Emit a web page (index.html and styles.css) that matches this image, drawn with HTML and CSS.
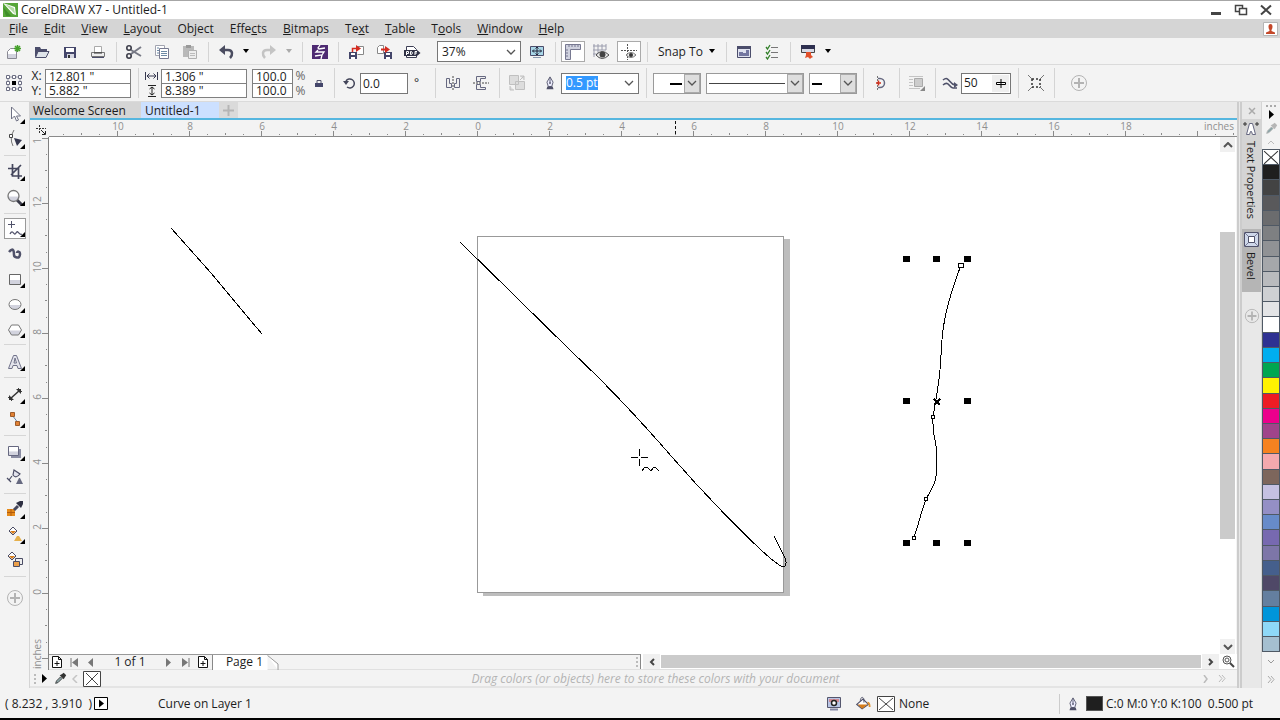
FILE: index.html
```html
<!DOCTYPE html>
<html lang="en">
<head>
<meta charset="utf-8">
<title>CorelDRAW X7 - Untitled-1</title>
<link rel="stylesheet" href="styles.css">
</head>
<body>
<svg class="defs" aria-hidden="true">
  <defs>
    <linearGradient id="pale" x1="0" y1="0" x2="0" y2="1"><stop offset=".5" stop-color="#fff"/><stop offset=".6" stop-color="#d2d3de"/></linearGradient>
    <symbol id="caret" viewBox="0 0 8 5"><path d="M1 0h6L4 4z"/></symbol>
    <symbol id="chev" viewBox="0 0 10 6"><path d="M1 1l4 4 4-4" fill="none" stroke="currentColor" stroke-width="1.3"/></symbol>
    <symbol id="plus" viewBox="0 0 18 18"><g fill="none" stroke="#b3b3b3"><circle cx="9" cy="9" r="7.5"/><path d="M9 4v10M4 9h10" stroke-width="2"/></g></symbol>
    <symbol id="addpage" viewBox="0 0 10 12"><path d="M.5.5h6l3 3v8h-9zM6.500.5v3h3M5 5v5M2.500 7.500h5" fill="#fff" stroke="#111"/></symbol>
    <symbol id="nib" viewBox="0 0 12 16"><path d="M6 1L2.500 7l1.500 5h4l1.500-5zM6 2v6" fill="#eef" stroke="#4f5068"/><circle cx="6" cy="8" r="1" fill="#4f5068"/><path d="M3 12h6l1 3H2z" fill="#4f5068"/></symbol>
    <symbol id="dropper" viewBox="0 0 16 16"><path d="M2 14l1-3 5-5 2 2-5 5z" fill="#8aa3a6" stroke="currentColor"/><path d="M7 4l5 5 1-2 2-3-3-3-3 2z" fill="currentColor"/></symbol>
    <symbol id="bucket" viewBox="0 0 18 16"><path d="M2 9l7-6 6 6-7 5z" fill="#fff" stroke="#4f5068" stroke-width="1.300"/><path d="M3 9h11l-6 5z" fill="#d67d1b"/><path d="M6 5c0-5 4-5 4-1v3" fill="none" stroke="#4f5068"/><path d="M14 7c2 0 2.500 2 2.500 5" fill="none" stroke="#e0922f" stroke-width="2"/></symbol>
  </defs>
</svg>
<header>
  <div class="titlebar">
    <svg class="logo" viewBox="0 0 15 14"><path fill="#57a639" d="M0 0h15v14H0z"/><path fill="#fff" d="M0 0l12 4 1 8-3-1z"/><path d="M2 1l9 4 1 6z" fill="#b5dba5"/><path d="M0 4l8 9H3z" fill="#3f8e2a"/></svg>
    <h1>CorelDRAW X7 - Untitled-1</h1>
    <div class="winctl">
      <button aria-label="Minimize"><svg width="12" height="12"><path d="M1 9.500h10" stroke="#444" stroke-width="3"/></svg></button>
      <button aria-label="Restore"><svg width="14" height="12"><path d="M5 7.500H1.500v-6h7V4M5.500 4.500h7v6h-7z" fill="none" stroke="#444" stroke-width="1.500"/></svg></button>
      <button aria-label="Close"><svg width="12" height="12"><path d="M1 1.500l10 9M11 1.500l-10 9" stroke="#444" stroke-width="2"/></svg></button>
    </div>
  </div>
  <nav class="menubar">
    <button><u>F</u>ile</button><button><u>E</u>dit</button><button><u>V</u>iew</button><button><u>L</u>ayout</button><button>Ob<u>j</u>ect</button><button>Effe<u>c</u>ts</button><button><u>B</u>itmaps</button><button>Te<u>x</u>t</button><button><u>T</u>able</button><button>T<u>o</u>ols</button><button><u>W</u>indow</button><button><u>H</u>elp</button>
    <button class="user" aria-label="Sign in"><svg width="15" height="14"><path fill="#fff" stroke="#b5b5b5" d="M.5.500h14v13H.5z"/><path fill="#c4482a" d="M7.500 2C5 2 5 6 6.500 8v1L3 10.500V12h9v-1.500L8.500 9V8C10 6 10 2 7.500 2z"/></svg></button>
  </nav>
  <div class="bar standard">
    <button class="btn" aria-label="New"><svg width="16" height="16"><path d="M1.500 7.500l3-3h6v10h-9z" fill="url(#pale)" stroke="#8a8a94"/><path d="M11.500 1v7M8 4.500h7M9 2l5 5M14 2L9 7" stroke="#45a12b" stroke-width="1.500"/></svg></button>
    <button class="btn" aria-label="Open"><svg width="16" height="16"><path d="M1 13V3h5l1 2h6v3" fill="#4b4d6b"/><path d="M1.500 13.500L4 7.500h11l-3 6z" fill="#dfe4ea" stroke="#4b4d6b"/></svg></button>
    <button class="btn" aria-label="Save"><svg width="16" height="16"><path d="M2 3h12v11H2z" fill="#44466a"/><path d="M4 4h8v4H4z" fill="#fff"/><path d="M5 10h7v4H5z" fill="#d6d7e2"/><path d="M6 11h2v3H6z" fill="#333"/></svg></button>
    <button class="btn" aria-label="Print"><svg width="16" height="16"><path d="M4.500 8V2.500h7V8" fill="#fff" stroke="#aaa"/><path d="M1.500 8.500h13v4h-13z" fill="#eee" stroke="#777"/><path d="M2 13h12v1H2z" fill="#4b4d6b"/><path d="M4 9h8" stroke="#333"/></svg></button>
    <span class="sep"></span>
    <button class="btn" aria-label="Cut"><svg width="18" height="16"><path d="M6 6l10 6M6 10l10-7" stroke="#777985" stroke-width="2"/><g fill="none" stroke="#3b3c48" stroke-width="1.600"><circle cx="4" cy="4" r="2.200"/><circle cx="4" cy="12" r="2.200"/></g></svg></button>
    <button class="btn" aria-label="Copy"><svg width="16" height="16"><g fill="#fff" stroke="#a2a4b0"><path d="M1.500 1.500h9v10h-9z"/><path d="M5.500 4.500h9v10h-9z" stroke="#777a91"/></g><path d="M3 4h2M3 6.500h2M3 9h2M7 7.500h6M7 9.500h6M7 11.500h6" stroke="#6d8aa5"/></svg></button>
    <button class="btn" aria-label="Paste" disabled><svg width="16" height="16"><path d="M1 2h11v11H1z" fill="#b9b9b9"/><path d="M4 1h5v3H4z" fill="#999"/><path d="M6.500 6.500h8v8h-8z" fill="#ededed" stroke="#b0b0b0"/><path d="M8 9.500h5M8 11.500h5" stroke="#bbb"/></svg></button>
    <span class="sep"></span>
    <button class="btn" aria-label="Undo"><svg width="16" height="16"><path d="M6 6h4c5 0 5 5 2 8" fill="none" stroke="#4a4c60" stroke-width="2.500"/><path d="M1 6l6-5v10z" fill="#4a4c60"/></svg></button>
    <button class="drop" aria-label="Undo list"><svg width="8" height="5"><use href="#caret"/></svg></button>
    <button class="btn" aria-label="Redo" disabled><svg width="16" height="16"><path d="M10 6H6c-5 0-5 5-2 8" fill="none" stroke="#c4c4c4" stroke-width="2.500"/><path d="M15 6L9 1v10z" fill="#c4c4c4"/></svg></button>
    <button class="drop" aria-label="Redo list" disabled><svg width="8" height="5" fill="#aaa"><use href="#caret"/></svg></button>
    <span class="sep"></span>
    <button class="btn" aria-label="Search content"><svg width="16" height="16"><path fill="#4e2a72" d="M0 1h16v14H0z"/><path d="M8 1L6 4l1 1 6-1M6 6L4 8h8L10 11l-7 1M10 11l-1 4" fill="none" stroke="#fff" stroke-width="1.300"/></svg></button>
    <span class="sep"></span>
    <button class="btn" aria-label="Import"><svg width="17" height="16"><path d="M9.500 2.500h6v8h-6" fill="#fff" stroke="#888"/><path d="M1 8h8v7H1z" fill="#44466a"/><path d="M3 9h4v2H3zM3 13h4v2H3z" fill="#fff"/><path d="M4.500 8V4.500H9" fill="none" stroke="#d42b1f" stroke-width="1.500"/><path d="M8 1l5 3.500L8 8z" fill="#d42b1f"/></svg></button>
    <button class="btn" aria-label="Export"><svg width="17" height="16"><path d="M1.500 9.500v-6l2-2h4v8z" fill="#fff" stroke="#888"/><path d="M8 8h8v7H8z" fill="#44466a"/><path d="M10 9h4v2h-4zM10 13h4v2h-4z" fill="#fff"/><path d="M5 5.500h5" stroke="#d42b1f" stroke-width="2"/><path d="M9 2l5 3.500L9 9z" fill="#d42b1f"/></svg></button>
    <button class="btn" aria-label="Publish to PDF"><svg width="17" height="16"><path d="M2.500 13.500v-11h7l3 3v8z" fill="#fff" stroke="#3d3f55"/><path d="M0 6h13l3.500 3L13 12H0z" fill="#2f3144"/><path d="M2.500 11V7.500h2v2h-2M6.500 7.500v3h1l1-1.500-1-1.500zM11 11V7.500h2M11 9h2" stroke="#fff" fill="none"/></svg></button>
    <span class="select zoomsel"><select aria-label="Zoom level"><option>37%</option><option>50%</option><option>100%</option></select><svg class="chev" width="10" height="6"><use href="#chev"/></svg></span>
    <button class="btn" aria-label="Full-screen preview"><svg width="16" height="16"><path d="M1.500 2.500h13v9h-13z" fill="#a9d7e8" stroke="#4b4d6b"/><path d="M4 13.500h8" stroke="#8a9ab0"/><path d="M8 3v8M3.500 7h9M6.500 4.500L8 3l1.500 1.500M6.500 9.500L8 11l1.500-1.500M5 5.500L3.500 7 5 8.500M11 5.500L12.500 7 11 8.500" stroke="#222439" fill="none"/></svg></button>
    <span class="sep"></span>
    <button class="btn on" aria-label="Show rulers" aria-pressed="true"><svg width="18" height="18"><path d="M1.500 1.500h15v5h-10v10h-5z" fill="#d0d2df" stroke="#777991"/><path d="M5 2v2M8 2v2M11 2v2M14 2v2M2 7h2M2 10h2M2 13h2" stroke="#777991"/></svg></button>
    <button class="btn" aria-label="Show grid"><svg width="18" height="16"><path d="M1 2h13M1 6h13M1 10h5M2 0v13M6 0v11M10 0v6M14 0v6" stroke="#9a9cad"/><path d="M4 11q6-7 13 0q-7 7-13 0z" fill="#eee" stroke="#4a4a4a"/><circle cx="10.500" cy="10.500" r="3" fill="#444"/></svg></button>
    <button class="btn on" aria-label="Show guidelines" aria-pressed="true"><svg width="18" height="18"><path d="M1 7.500h16M7.500 1v16" stroke="#555" stroke-dasharray="2 1"/><path d="M6 12q5-5 10 0q-5 5-10 0z" fill="#eee" stroke="#777"/><circle cx="11" cy="12" r="2" fill="#333"/></svg></button>
    <span class="sep"></span>
    <button class="snap">Snap To <svg width="8" height="5"><use href="#caret"/></svg></button>
    <span class="sep"></span>
    <button class="btn" aria-label="Welcome screen"><svg width="16" height="16"><path d="M1.500 2.500h13v11h-13z" fill="#dfe2ef" stroke="#4b4d6b"/><path d="M1 2h14v3H1z" fill="#4b4d6b"/><path d="M3 12V8h4v1h3V6h3v6z" fill="#7376a0"/></svg></button>
    <button class="btn" aria-label="Options"><svg width="14" height="16"><path d="M6 3.500h7M6 8.500h7M6 13.500h7" stroke="#777"/><path d="M1 3l1.500 2L5 1M1 8l1.500 2L5 6M1 13l1.500 2L5 11" stroke="#34802b" fill="none" stroke-width="1.300"/></svg></button>
    <span class="sep"></span>
    <button class="btn" aria-label="Application launcher"><svg width="16" height="16"><path d="M1.500 1.500h13v7h-13z" fill="#d8dae6" stroke="#444"/><path d="M1 1h14v4H1z" fill="#2e3050"/><path d="M6 8h5v3l2 2-2 1-1 1-2-2-3 1 1-3z" fill="#e2502b"/></svg></button>
    <button class="drop" aria-label="Launcher list"><svg width="8" height="5"><use href="#caret"/></svg></button>
  </div>
  <div class="bar props">
    <button class="btn" aria-label="Object origin"><svg width="18" height="18"><path d="M3 3h12v12H3z" fill="none" stroke="#8d8fa0"/><g fill="#fff" stroke="#6b6d82"><path d="M1.500 1.500h3v3h-3zM7.500 1.500h3v3h-3zM13.500 1.500h3v3h-3zM1.500 7.500h3v3h-3zM13.500 7.500h3v3h-3zM1.500 13.500h3v3h-3zM7.500 13.500h3v3h-3zM13.500 13.500h3v3h-3z"/></g><path d="M7 7h4v4H7z"/></svg></button>
    <div class="fields xy">
      <label for="x">X:</label><input id="x" value="12.801 &quot;">
      <label for="y">Y:</label><input id="y" value="5.882 &quot;">
    </div>
    <span class="sep"></span>
    <div class="fields wh">
      <label for="w"><svg role="img" aria-label="Width" width="13" height="10"><path d="M.5 1v8M12.500 1v8M2 5h9M4.500 2.500L2 5l2.500 2.500M8.500 2.500L11 5 8.500 7.500" stroke="#35374e" fill="none"/></svg></label><input id="w" value="1.306 &quot;">
      <label for="h"><svg role="img" aria-label="Height" width="10" height="12"><path d="M1 .5h8M1 11.500h8M5 2v8M2.500 4L5 2l2.500 2M2.500 8L5 10l2.500-2" stroke="#222" fill="none"/></svg></label><input id="h" value="8.389 &quot;">
    </div>
    <div class="fields pct">
      <input id="sx" value="100.0"><label for="sx">%</label>
      <input id="sy" value="100.0"><label for="sy">%</label>
    </div>
    <button class="btn small" aria-label="Lock ratio"><svg width="8" height="9"><path d="M2 4V1.500h4V4" fill="none" stroke="#55576e"/><path d="M0 4h8v4H0z" fill="#44466a"/></svg></button>
    <span class="sep"></span>
    <label class="btn small" for="rot"><svg role="img" aria-label="Rotation" width="12" height="12"><path d="M3 4a4.500 4.500 0 1 1 1 6" fill="none" stroke="#44465a" stroke-width="1.500"/><path d="M0 4h6L3 8z" fill="#44465a"/></svg></label>
    <input class="box rot" id="rot" value="0.0"><span class="deg">°</span>
    <span class="sep"></span>
    <button class="btn" aria-label="Mirror horizontally"><svg width="16" height="14"><path d="M8 0v14" stroke="#444" stroke-dasharray="2 1"/><path d="M1.500 2.500h3v5h2v4h-5zM14.500 2.500h-3v5h-2v4h5z" fill="#eee" stroke="#666880"/></svg></button>
    <button class="btn" aria-label="Mirror vertically"><svg width="16" height="16"><path d="M0 8h16" stroke="#444" stroke-dasharray="2 1"/><path d="M3.500 1.500h9v2h-5v3h-4zM3.500 14.500h9v-2h-5v-3h-4z" fill="#eee" stroke="#666880"/></svg></button>
    <span class="sep"></span>
    <button class="btn" aria-label="Order" disabled><svg width="16" height="16"><g fill="#ddd" stroke="#c0c0c0"><path d="M.5.500h9v9h-9zM6.500 6.500h9v8h-9z"/><path d="M11 5l4-4M11 1h4v4M1 11v4h4"/></g></svg></button>
    <span class="sep"></span>
    <label class="btn small" for="outline"><svg role="img" aria-label="Outline width" width="12" height="14"><use href="#nib"/></svg></label>
    <span class="combo"><input id="outline" value="0.5 pt"><button aria-label="Outline width list"><svg width="10" height="6"><use href="#chev"/></svg></button></span>
    <span class="sep"></span>
    <div class="lines">
      <span class="select"><select aria-label="Start arrowhead"><option></option></select><svg class="line end" width="12" height="2"><path d="M0 1h12" stroke="#000" stroke-width="2"/></svg><span class="knob"><svg width="10" height="6"><use href="#chev"/></svg></span></span>
      <span class="select wide"><select aria-label="Line style"><option></option></select><svg class="line" width="76" height="2"><path d="M0 .5h76" stroke="#444" stroke-width="1"/></svg><span class="knob"><svg width="10" height="6"><use href="#chev"/></svg></span></span>
      <span class="select"><select aria-label="End arrowhead"><option></option></select><svg class="line" width="12" height="2"><path d="M0 1h10" stroke="#000" stroke-width="2"/></svg><span class="knob"><svg width="10" height="6"><use href="#chev"/></svg></span></span>
    </div>
    <span class="sep"></span>
    <button class="btn" aria-label="Close curve"><svg width="12" height="14"><path d="M3 2.500h2a4.500 4.500 0 0 1 0 9H3" fill="none" stroke="#666880" stroke-width="1.500"/><path d="M2.500 0v14" stroke="#777" stroke-dasharray="2 1"/><path d="M1 7h5M3.500 4.500v5" stroke="#d0321f" stroke-width="1.500"/></svg></button>
    <span class="sep"></span>
    <button class="btn" aria-label="Wrap text" disabled><svg width="18" height="16"><path d="M1 1.500h14M1 4.500h4M1 7.500h4M1 10.500h4M1 13.500h11" stroke="#c4c4c4"/><path d="M6.500 3.500h8v8h-8z" fill="#ccc" stroke="#aaa"/><path d="M12 16h5v-5z" fill="#888"/></svg></button>
    <span class="sep"></span>
    <label class="btn small" for="smooth"><svg role="img" aria-label="Freehand smoothing" width="16" height="12"><path d="M1 3c6-5 6 4 12 5M1 8c6-5 6 3 10 3h4" fill="none" stroke="#50526a" stroke-width="1.600"/><path d="M12 5v6l4-3z" fill="#50526a"/></svg></label>
    <span class="box spin"><input id="smooth" value="50"><button aria-label="Adjust smoothing"><svg width="10" height="9"><path d="M5 0v9M.5 3.500h9v2h-9z" fill="#fff" stroke="#000"/></svg></button></span>
    <span class="sep"></span>
    <button class="btn" aria-label="Bounding box"><svg width="16" height="16"><path d="M4 4h9M4 12h9M4 4v9M12 4v9" stroke="#333" stroke-width="1.500" stroke-dasharray="2 2"/><path d="M0 0l4 4M16 0l-4 4M0 16l4-4M16 16l-4-4" stroke="#777"/></svg></button>
    <span class="sep"></span>
    <button class="btn add" aria-label="Customize"><svg width="18" height="18"><use href="#plus"/></svg></button>
  </div>
</header>
<main>
  <div class="toolbox">
    <button aria-label="Pick"><svg width="30" height="25"><path d="M11.500 5v12l3-3 2 5 2-1-2-4h4z" fill="#fff" stroke="#707285"/><path d="M20 22h5v-5z"/></svg></button>
    <button aria-label="Shape"><svg width="30" height="25"><path d="M14 3q-5 8-1 16" fill="none" stroke="#777"/><path d="M9.500 7.500h3v3h-3z" fill="#fff" stroke="#444"/><path d="M14 11l8 2-5 6z" fill="#35374e"/><path d="M20 22h5v-5z"/></svg></button>
    <hr>
    <button aria-label="Crop"><svg width="30" height="25"><path d="M12.500 4v12H22M8 8.500h10.500V19M21 5L11 15" fill="none" stroke="#44465c" stroke-width="1.700"/><path d="M20 21h5v-5z"/></svg></button>
    <button aria-label="Zoom"><svg width="30" height="25"><path d="M17 15l5 5" stroke="#3a3b4a" stroke-width="3"/><circle cx="13.500" cy="11" r="5.500" fill="url(#pale)" stroke="#777" stroke-width="1.300"/><path d="M20 21h5v-5z"/></svg></button>
    <hr>
    <button class="on" aria-label="Freehand" aria-pressed="true"><svg width="22" height="21"><path d="M7.500 3v7M4 6.500h7" stroke="#50526a"/><path d="M6 16c3-6 4 3 6-1s3 3 6 1" fill="none" stroke="#50526a" stroke-width="1.300"/><path d="M16 19h5v-5z"/></svg></button>
    <button aria-label="Artistic media"><svg width="30" height="25"><path d="M9 11c5-6 5 1 5 3s6 5 6-1c0-3-3-3-3-1" fill="none" stroke="#50526a" stroke-width="2.500"/></svg></button>
    <button aria-label="Rectangle"><svg width="30" height="25"><path d="M9.500 8.500h11v10h-11z" fill="url(#pale)" stroke="#666"/><path d="M20 22h5v-5z"/></svg></button>
    <button aria-label="Ellipse"><svg width="30" height="25"><ellipse cx="15" cy="13.500" rx="6" ry="5" fill="url(#pale)" stroke="#777"/><path d="M20 22h5v-5z"/></svg></button>
    <button aria-label="Polygon"><svg width="30" height="25"><path d="M8.500 14l3-5h7l3 5-3 5h-7z" fill="url(#pale)" stroke="#777"/><path d="M20 22h5v-5z"/></svg></button>
    <hr>
    <button aria-label="Text"><svg width="30" height="25"><path d="M8.500 19.500l5-13h3l5 13h-3.500l-1-3h-4l-1 3zM14 14h2.500L15 9z" fill="#e3e4ec" stroke="#70728a"/><path d="M20 22h5v-5z"/></svg></button>
    <hr>
    <button aria-label="Parallel dimension"><svg width="30" height="25"><path d="M10 17l10-9" stroke="#333" stroke-width="1.500"/><path d="M8 15l4 4M18 6l4 4" stroke="#444"/><path d="M9 18v-5l5 5zM21 7v5l-5-5z" fill="#333"/><path d="M20 22h5v-5z"/></svg></button>
    <button aria-label="Straight connector"><svg width="30" height="25"><path d="M12 8l7 9" stroke="#6585aa"/><path d="M10.500 5.500h4v4h-4zM15.500 14.500h4v4h-4z" fill="#e18134" stroke="#9b5b2b"/><path d="M20 21h5v-5z"/></svg></button>
    <hr>
    <button aria-label="Drop shadow"><svg width="30" height="25"><path d="M11 9h10v9H11z" fill="#8b8da3"/><path d="M8.500 6.500h10v9h-10z" fill="url(#pale)" stroke="#666880"/><path d="M20 21h5v-5z"/></svg></button>
    <button aria-label="Transparency"><svg width="30" height="25"><path d="M14 5l6 4q-4 5-7 1zM12 11l-3 4M7 13l4 4" fill="#e3e4ed" stroke="#4b4d65" stroke-width="1.200"/><path d="M16 19l3-6h1l3 6z" fill="#666980"/></svg></button>
    <hr>
    <button aria-label="Color eyedropper"><svg width="30" height="25"><path d="M7 11h8v7H7z" fill="#e58a1b"/><path d="M7 14.500h8M11 11v7" stroke="#b35c0d"/><path d="M14 12l4-4" stroke="#45475c" stroke-width="3"/><path d="M16 5l5 5 2-4V3h-3z" fill="#2e3042"/><path d="M20 21h5v-5z"/></svg></button>
    <button aria-label="Interactive fill"><svg width="30" height="25"><path d="M9 8l4-4 4 4-4 4z" fill="#fff" stroke="#4b4d65"/><path d="M10 8h6l-3 3z" fill="#d67d1b"/><path d="M14 18l3-5h2l3 5z" fill="#e6b04b"/><path d="M20 21h5v-5z"/></svg></button>
    <button aria-label="Smart fill"><svg width="30" height="25"><path d="M8 8l4-4 4 4-4 4z" fill="#fff" stroke="#4b4d65"/><path d="M9 8h6l-3 3z" fill="#d67d1b"/><path d="M15.500 10.500h7v6h-7z" fill="#eee" stroke="#4b4d65"/><path d="M13.500 13.500h6v5h-6z" fill="#eca04a" stroke="#4b4d65"/></svg></button>
    <hr>
    <button class="add" aria-label="Customize toolbox"><svg width="18" height="18"><use href="#plus"/></svg></button>
  </div>
  <section class="document">
    <div class="tabs"><button>Welcome Screen</button><button class="active">Untitled-1</button><button class="new" aria-label="New document"><svg width="11" height="11"><path d="M5.500 0v11M0 5.500h11" stroke="#b5b5b5" stroke-width="2"/></svg></button></div>
    <div class="view">
      <div class="corner"><svg width="12" height="12"><path d="M3.500 1v9M0 4.500h10" stroke="#333" stroke-dasharray="2 1"/><path d="M5 6l4 4M6 10.500h3.500V7" stroke="#222" fill="none"/></svg></div>
      <svg class="ruler-h">
        <defs><pattern id="ticks-h" x="428" width="72" height="17" patternUnits="userSpaceOnUse"><path d="M0 11h1v5H0zM18 14h1v1h-1zM36 13h1v2h-1zM54 14h1v1h-1z" fill="#8a8a8a"/></pattern></defs>
        <rect width="100%" height="17" fill="url(#ticks-h)"/>
        <g><text x="69" y="10">10</text><text x="141" y="10">8</text><text x="213" y="10">6</text><text x="285" y="10">4</text><text x="357" y="10">2</text><text x="429" y="10">0</text><text x="501" y="10">2</text><text x="573" y="10">4</text><text x="645" y="10">6</text><text x="717" y="10">8</text><text x="789" y="10">10</text><text x="861" y="10">12</text><text x="933" y="10">14</text><text x="1005" y="10">16</text><text x="1077" y="10">18</text><text x="1170" y="10">inches</text></g>
        <path d="M626.500 1v15" stroke="#111" stroke-dasharray="3 2"/>
      </svg>
      <svg class="ruler-v">
        <defs><pattern id="ticks-v" y="66" width="18" height="65" patternUnits="userSpaceOnUse"><path d="M12 0h6v1h-6zM16 16h1v1h-1zM15 32h2v1h-2zM16 49h1v1h-1z" fill="#8a8a8a"/></pattern></defs>
        <rect width="18" height="100%" fill="url(#ticks-v)"/>
        <g><text transform="translate(11 4) rotate(-90)">1</text><text transform="translate(11 65) rotate(-90)">12</text><text transform="translate(11 130) rotate(-90)">10</text><text transform="translate(11 195) rotate(-90)">8</text><text transform="translate(11 260) rotate(-90)">6</text><text transform="translate(11 325) rotate(-90)">4</text><text transform="translate(11 390) rotate(-90)">2</text><text transform="translate(11 455) rotate(-90)">0</text><text transform="translate(11 517) rotate(-90)">inches</text></g>
      </svg>
      <svg class="canvas" role="img" aria-label="Drawing page">
        <g transform="translate(-49 -137)" fill="none" stroke="#000" shape-rendering="crispEdges">
          <path d="M483 592h301V239h6v357H483z" fill="#bdbdbd" stroke="none"/>
          <path d="M477.500 236.500h306v356h-306z" fill="#fff" stroke="#999"/>
          <path d="M171 228L211 273Q240 308 262 334"/>
          <path d="M460 242L572 352Q620 397 672 457C706 496 774 567 784 567C790 563 782 553 774 536"/>
          <path d="M961 265C945 308 942 328 941 355S938 385 933 417C932 440 937 438 937 458S936 483 926 499C921 512 918 527 914 537"/>
          <path d="M903 256h7v6h-7zM933 256h7v6h-7zM964 256h7v6h-7zM903 398h7v6h-7zM964 398h7v6h-7zM903 540h7v6h-7zM933 540h7v6h-7zM964 540h7v6h-7z" fill="#000" stroke="none"/>
          <path d="M958.500 263.500h5v4h-5zM931.500 415.500h3v3h-3zM924.500 497.500h3v3h-3zM912.500 536.500h3v3h-3z" fill="#fff"/>
          <path d="M934 399l6 6M940 399l-6 6" stroke-width="2"/>
          <path d="M639.500 449v7M639.500 459v7M631 457.500h7M641 457.500h7"/>
          <path d="M642 471l3-4 3 1 3 3 3-4 2 1 3 3"/>
        </g>
      </svg>
      <div class="vscroll">
        <button aria-label="Scroll up"><svg width="10" height="6"><path d="M1 5l4-4 4 4" fill="none" stroke="#555" stroke-width="2"/></svg></button>
        <div class="track"><div class="thumb"></div></div>
        <button aria-label="Scroll down"><svg width="10" height="6"><path d="M1 1l4 4 4-4" fill="none" stroke="#555" stroke-width="2"/></svg></button>
      </div>
      <div class="pagebar">
        <div class="pages">
          <button aria-label="Add page before"><svg width="10" height="12"><use href="#addpage"/></svg></button>
          <button aria-label="First page"><svg width="8" height="9"><path d="M1 0v9" stroke="#777"/><path d="M8 0v9L2 4.500z" fill="#777"/></svg></button>
          <button aria-label="Previous page"><svg width="6" height="9"><path d="M5 0v9L0 4.500z" fill="#777"/></svg></button>
          <span>1 of 1</span>
          <button aria-label="Next page"><svg width="6" height="9"><path d="M0 0v9l5-4.500z" fill="#777"/></svg></button>
          <button aria-label="Last page"><svg width="8" height="9"><path d="M7 0v9" stroke="#777"/><path d="M0 0v9l6-4.500z" fill="#777"/></svg></button>
          <button aria-label="Add page after"><svg width="10" height="12"><use href="#addpage"/></svg></button>
          <button class="pagetab">Page 1<svg width="12" height="15"><path d="M0 0l11 9v6" fill="#fff" stroke="#999"/><path d="M0 0v15" stroke="#fff"/></svg></button>
          <i class="grip"></i>
        </div>
        <div class="hscroll">
          <button aria-label="Scroll left"><svg width="6" height="8"><path d="M5 1L2 4l3 3" fill="none" stroke="#444" stroke-width="2"/></svg></button>
          <div class="thumb"></div>
          <button aria-label="Scroll right"><svg width="6" height="8"><path d="M1 1l3 3-3 3" fill="none" stroke="#444" stroke-width="2"/></svg></button>
        </div>
        <button class="navig" aria-label="Navigator"><svg width="13" height="13"><circle cx="5" cy="5" r="4" fill="#fff" stroke="#555"/><circle cx="5" cy="5" r="2" fill="none" stroke="#555"/><path d="M8 8l4 4" stroke="#444" stroke-width="2"/></svg></button>
      </div>
    </div>
    <div class="tray">
      <i class="grip"></i>
      <button aria-label="Palette menu"><svg width="5" height="9"><path d="M0 0v9l5-4.500z"/></svg></button>
      <button aria-label="Pick color"><svg width="13" height="13" color="#333"><use href="#dropper"/></svg></button>
      <button class="back" aria-label="Scroll palette left"><svg width="6" height="8"><path d="M5 0L1 4l4 4" fill="none" stroke="#c4c4c4" stroke-width="1.500"/></svg></button>
      <button class="nocolor" aria-label="No color"><svg width="18" height="16"><path d="M.5.500h17v15H.5z" fill="#fff" stroke="#444"/><path d="M3 2l12 12M15 2L3 14" stroke="#444"/></svg></button>
      <p>Drag colors (or objects) here to store these colors with your document</p>
      <button aria-label="Scroll palette right"><svg width="6" height="8"><path d="M1 0l3 4-3 4" fill="none" stroke="#bbb" stroke-width="1.500"/></svg></button>
      <button aria-label="More colors"><svg width="8" height="7"><path d="M1 0l3 3.500L1 7M4 0l3 3.500L4 7" fill="none" stroke="#bbb"/></svg></button>
    </div>
  </section>
  <aside class="dockers">
    <button class="x" aria-label="Close docker"><svg width="8" height="8"><path d="M1 1l6 6M7 1L1 7" stroke="#aaa" stroke-width="1.500"/></svg></button>
    <button class="dock"><svg width="16" height="14"><path d="M3.500 12.500l3-11h3l3 11h-3l-1-3h-1l-1 3z" fill="#fff" stroke="#656780"/><path d="M0 2h4M2 0v4M12 2h4M14 0v4" stroke="#333"/></svg><span>Text Properties</span></button>
    <button class="dock active"><svg width="15" height="15"><path d="M.5.500h14v14H.5z" fill="#cfd8ea" stroke="#50526a"/><path d="M0 0l15 15M15 0L0 15" stroke="#7a7d98"/><path d="M4.500 4.500h6v6h-6z" fill="#fff" stroke="#50526a"/></svg><span>Bevel</span></button>
    <button class="more" aria-label="Add docker"><svg width="16" height="16" viewBox="0 0 18 18"><use href="#plus"/></svg></button>
  </aside>
  <aside class="palette">
    <i class="dots"></i>
    <button aria-label="Palette options"><svg width="5" height="9"><path d="M0 0v9l5-4.500z"/></svg></button>
    <button aria-label="Eyedropper"><svg width="13" height="13" color="#b5b5b5"><use href="#dropper"/></svg></button>
    <button aria-label="Scroll colors up"><svg width="8" height="5"><path d="M1 4l3-3 3 3" fill="none" stroke="#bbb"/></svg></button>
    <div class="swatches">
      <button aria-label="None" style="background:#fff"><svg viewBox="0 0 15 14"><path d="M1 1l13 12M14 1L1 13" stroke="#333"/></svg></button>
      <button aria-label="Black" style="background:#1f1f1f"></button>
      <button aria-label="90% black" style="background:#434343"></button>
      <button aria-label="80% black" style="background:#59595b"></button>
      <button aria-label="70% black" style="background:#6b6c6e"></button>
      <button aria-label="60% black" style="background:#7e8082"></button>
      <button aria-label="50% black" style="background:#909295"></button>
      <button aria-label="40% black" style="background:#a5a7aa"></button>
      <button aria-label="30% black" style="background:#b9bbbe"></button>
      <button aria-label="20% black" style="background:#ced0d3"></button>
      <button aria-label="10% black" style="background:#e3e4e6"></button>
      <button aria-label="White" style="background:#fff"></button>
      <button aria-label="Blue" style="background:#2e3192"></button>
      <button aria-label="Cyan" style="background:#00aeef"></button>
      <button aria-label="Green" style="background:#00a651"></button>
      <button aria-label="Yellow" style="background:#fff200"></button>
      <button aria-label="Red" style="background:#ed1c24"></button>
      <button aria-label="Magenta" style="background:#ec008c"></button>
      <button aria-label="Purple" style="background:#a0448a"></button>
      <button aria-label="Orange" style="background:#f58220"></button>
      <button aria-label="Pink" style="background:#f4a9ae"></button>
      <button aria-label="Dark brown" style="background:#7d665c"></button>
      <button aria-label="Powder blue" style="background:#c5c1e2"></button>
      <button aria-label="Pastel blue" style="background:#948fc5"></button>
      <button aria-label="Baby blue" style="background:#678bc9"></button>
      <button aria-label="Electric blue" style="background:#7769b0"></button>
      <button aria-label="Twilight blue" style="background:#7d76a8"></button>
      <button aria-label="Navy blue" style="background:#455f8c"></button>
      <button aria-label="Deep navy blue" style="background:#4f4867"></button>
      <button aria-label="Desert blue" style="background:#647f9f"></button>
      <button aria-label="Sky blue" style="background:#0095da"></button>
      <button aria-label="Ice blue" style="background:#8ed8f8"></button>
      <button aria-label="Light blue green" style="background:#a5bfd0"></button>
    </div>
    <button class="more-colors" aria-label="Scroll colors down"><svg width="8" height="5"><path d="M1 1l3 3 3-3" fill="none" stroke="#999"/></svg></button>
    <button class="more-colors" aria-label="Expand palette"><svg width="8" height="7"><path d="M1 0l3 3.500L1 7M4 0l3 3.500L4 7" fill="none" stroke="#aaa"/></svg></button>
  </aside>
</main>
<footer>
  <span class="pos">( 8.232 , 3.910 &nbsp;)</span>
  <button aria-label="Status options"><svg width="14" height="13"><path d="M.5.500h13v12H.5z" fill="#fff" stroke="#000"/><path d="M5 2.500v8l5-4z"/></svg></button>
  <span class="object">Curve on Layer 1</span>
  <div class="proof"><svg width="16" height="14"><path d="M1.500.500h13v10h-13z" fill="#b9c5e5" stroke="#55576e"/><path d="M3 2h10v3H3z" fill="#cf8a94"/><circle cx="8" cy="6" r="2.500" fill="#fff" stroke="#222" stroke-width="1.500"/><path d="M4 12.500h8" stroke="#8487a5" stroke-width="2"/></svg></div>
  <div class="fill"><svg width="16" height="15"><use href="#bucket"/></svg><svg width="18" height="16"><path d="M.5.500h17v15H.5z" fill="#fff" stroke="#444"/><path d="M2 2l14 12M16 2L2 14" stroke="#444"/></svg><span>None</span></div>
  <div class="outline"><svg width="12" height="14"><use href="#nib"/></svg><i class="chip"></i><span>C:0 M:0 Y:0 K:100&nbsp; 0.500 pt</span></div>
</footer>
</body>
</html>
```
FILE: styles.css
```css
* { box-sizing: border-box; }
body {
  margin: 0;
  min-height: 100vh;
  display: flex;
  flex-direction: column;
  border-top: 1px solid #a6a6a6;
  border-bottom: 2px solid #000;
  background: #f3f3f3;
  color: #1c1c1c;
  font: 12px/16px "Open Sans", "Noto Sans", sans-serif;
  overflow: hidden;
}
.defs { position: absolute; width: 0; height: 0; }
button, input, select { font: inherit; color: inherit; border: 0; margin: 0; padding: 0; background: none; border-radius: 0; }
input { min-width: 0; outline: 0; }
button { display: flex; align-items: center; justify-content: center; flex: none; }
svg { display: block; flex: none; }
u { text-decoration: underline; text-underline-offset: 1px; }

.titlebar { display: flex; align-items: center; height: 18px; padding: 0 8px 0 3px; background: #fff; }
.logo { width: 15px; height: 14px; }
h1 { margin: 0 0 0 3px; font-size: 12px; font-weight: 400; line-height: 16px; }
.winctl { margin-left: auto; display: flex; gap: 12px; }
.menubar { display: flex; align-items: center; height: 19px; background: #d5d5d5; padding: 0 2px 0 1px; }
.menubar button { padding: 0 8px; display: block; }
.menubar .user { margin-left: auto; padding: 0; }

.bar { display: flex; align-items: center; border-bottom: 1px solid #dadada; }
.standard { height: 27px; padding-top: 1px; }
.props { height: 37px; }
.btn { width: 28px; height: 22px; display: flex; align-items: center; justify-content: center; flex: none; }
.btn.small { width: 22px; }
.btn.on { width: 24px; height: 21px; margin: 0 2px; background: #fff; border: 1px solid #aaa; }
.btn.add { margin-left: 7px; }
.drop { width: 15px; height: 22px; padding-right: 3px; }
.sep { width: 8px; height: 20px; flex: none; background: linear-gradient(#d4d4d4, #d4d4d4) center / 1px 100% no-repeat; }
.props .sep { height: 30px; }
.select { position: relative; display: block; flex: none; height: 21px; width: 48px; background: #fff; border: 1px solid #9a9a9a; }
.select select { appearance: none; width: 100%; height: 100%; padding-left: 4px; outline: 0; }
.zoomsel { width: 84px; margin: 0 2px 0 11px; border-color: #777; }
.chev { position: absolute; right: 4px; top: 7px; color: #555; pointer-events: none; }
.snap { width: 71px; height: 22px; justify-content: space-between; padding: 0 6px 0 7px; }

.fields { display: grid; grid-template-rows: 15px 14px; flex: none; align-items: center; }
.fields input { height: 100%; width: 100%; background: #fff; border: 1px solid #808080; padding: 0 3px; }
.fields input:last-of-type { border-top: 0; }
.fields label { display: flex; justify-content: center; }
.xy { grid-template-columns: 17px 86px; margin-right: 3px; }
.wh { grid-template-columns: 19px 86px; margin-right: 5px; }
.pct { grid-template-columns: 41px 15px; }
.pct label { color: #666; }
.box, .combo { height: 21px; background: #fff; border: 1px solid #777; flex: none; }
.rot { width: 48px; padding: 0 2px; }
.deg { width: 23px; padding-left: 6px; flex: none; }
.combo { display: flex; align-items: center; justify-content: space-between; width: 78px; padding: 0 4px; margin-right: 3px; }
.combo input { width: 32px; height: 14px; background: #3399ff; color: #fff; }
.combo button { color: #555; }
.lines { display: flex; gap: 5px; margin: 0 2px 0 3px; }
.wide { width: 98px; }
.line { position: absolute; left: 2px; top: 9px; pointer-events: none; }
.line.end { left: 16px; }
.knob { position: absolute; right: 0; top: 0; width: 16px; height: 19px; display: flex; align-items: center; justify-content: center; background: #dedede; border: 1px solid #aaa; color: #555; pointer-events: none; }
.spin { display: flex; width: 50px; margin-right: 3px; padding: 1px; }
.spin input { flex: 1; padding-left: 1px; }
.spin button { width: 17px; background: #eee; }

main { flex: 1; display: flex; min-height: 0; }
.toolbox { width: 30px; flex: none; border-right: 1px solid #d4d4d4; }
.toolbox button { width: 29px; height: 25px; }
.toolbox button.on { background: #fff; box-shadow: inset 0 0 0 1px #999; width: 22px; height: 21px; margin: 2px 4px; }
.toolbox hr { height: 1px; margin: 3px 3px 4px 4px; border: 0; background: #d6d6d6; }
.toolbox .add { margin-top: 8px; }

.document { flex: 1; min-width: 0; display: flex; flex-direction: column; }
.tabs { display: flex; height: 18px; background: #e9e9e9; border-bottom: 2px solid #55b6df; }
.tabs button { background: #d5d5d5; width: 111px; justify-content: flex-start; padding: 1px 0 0 3px; }
.tabs .active { background: #cce0ff; width: 78px; padding-left: 4px; }
.tabs .new { width: 19px; padding: 0; justify-content: center; background: #dadada; }
.view { flex: 1; min-height: 0; display: grid; grid-template: 17px minmax(0, 1fr) 16px / 19px minmax(0, 1fr) 18px; }
.corner { display: flex; align-items: center; justify-content: flex-end; padding: 2px 1px 0 0; }
.ruler-h { grid-column: 2 / 4; width: 100%; height: 17px; border-bottom: 1px solid #8a8a8a; }
.ruler-v { grid-row: 2 / 4; width: 19px; height: 100%; border-right: 1px solid #808080; }
.ruler-h text, .ruler-v text { font-size: 10px; fill: #8f8f8f; text-anchor: middle; }
.canvas { width: 100%; height: 100%; background: #fff; }
.vscroll { display: flex; flex-direction: column; background: #fff; padding-left: 1px; border-right: 1px solid #f3f3f3; }
.vscroll button { height: 15px; margin-right: 1px; background: #f0f0f0; }
.track { flex: 1; display: grid; grid-template-rows: 80fr 307fr 100fr; }
.track .thumb { grid-row: 2; background: #cbcbcb; margin-right: 1px; }
.pagebar { grid-column: 2 / 4; display: flex; min-width: 0; border-bottom: 1px solid #e0e0e0; }
.pages { flex: 593 1 0; display: flex; align-items: center; border-top: 1px solid #999; border-right: 1px solid #888; }
.pages button { width: 15px; margin-right: 2px; }
.pages span { width: 40px; text-align: center; margin: 0 11px 0 10px; }
.pages .pagetab { width: 67px; height: 15px; background: linear-gradient(90deg, #fff 54px, transparent 54px); border-left: 1px solid #888; justify-content: flex-end; gap: 4px; }
.grip { width: 3px; height: 10px; flex: none; background: repeating-linear-gradient(#bbb 0 2px, transparent 2px 4px) center / 2px 100% no-repeat; }
.pages .grip { margin-left: auto; margin-right: 2px; }
.hscroll { flex: 577 1 0; display: flex; background: #fff; padding-left: 2px; }
.hscroll button { width: 17px; background: #f0f0f0; }
.hscroll .thumb { flex: 1; background: #cbcbcb; margin: 1px; }
.navig { width: 18px; background: #fff; }
.tray { display: flex; align-items: center; height: 18px; padding: 1px 7px 0 3px; border-bottom: 2px solid #e4e4e4; }
.tray button { width: 16px; }
.tray .back { width: 13px; }
.tray .nocolor { width: 18px; margin-left: 2px; }
.tray p { flex: 1; margin: 0; padding-left: 12px; text-align: center; font-style: italic; color: #b3b3b3; }

.dockers { width: 24px; flex: none; display: flex; flex-direction: column; background: #e8e8e8; border-left: 5px double #ccc; }
.dockers .x { height: 17px; }
.dock { flex-direction: column; justify-content: flex-start; gap: 5px; padding: 3px 1px 0 0; height: 110px; background: #d4d4d4; }
.dock span { writing-mode: vertical-rl; font-size: 11px; line-height: 16px; }
.dock.active { height: 63px; background: #b5b5b5; }
.more { height: 48px; }
.palette { width: 19px; flex: none; display: flex; flex-direction: column; border-left: 1px solid #d4d4d4; }
.palette > button { height: 14px; }
.palette > .more-colors { height: 18px; }
.dots { width: 11px; height: 2px; margin: 3px auto 0; background: repeating-linear-gradient(90deg, #aaa 0 2px, transparent 2px 4px); }
.swatches { flex: 1; min-height: 0; display: flex; flex-direction: column; gap: 1px; padding: 1px; background: #4f5965; }
.swatches button { flex: 1; min-height: 0; }

footer { height: 30px; display: flex; align-items: center; padding: 1px 5px 0; }
.pos { width: 89px; white-space: nowrap; }
.object { margin-left: 50px; }
.proof { margin-left: auto; margin-right: 13px; }
.fill { display: flex; align-items: center; gap: 4px; width: 204px; }
.fill svg + svg { margin-left: 2px; }
.outline { display: flex; align-items: center; gap: 3px; width: 216px; height: 20px; padding-left: 7px; border-left: 1px solid #ccc; }
.chip { width: 17px; height: 15px; margin-left: 4px; background: #1f1f1f; border: 1px solid #555; }
```
